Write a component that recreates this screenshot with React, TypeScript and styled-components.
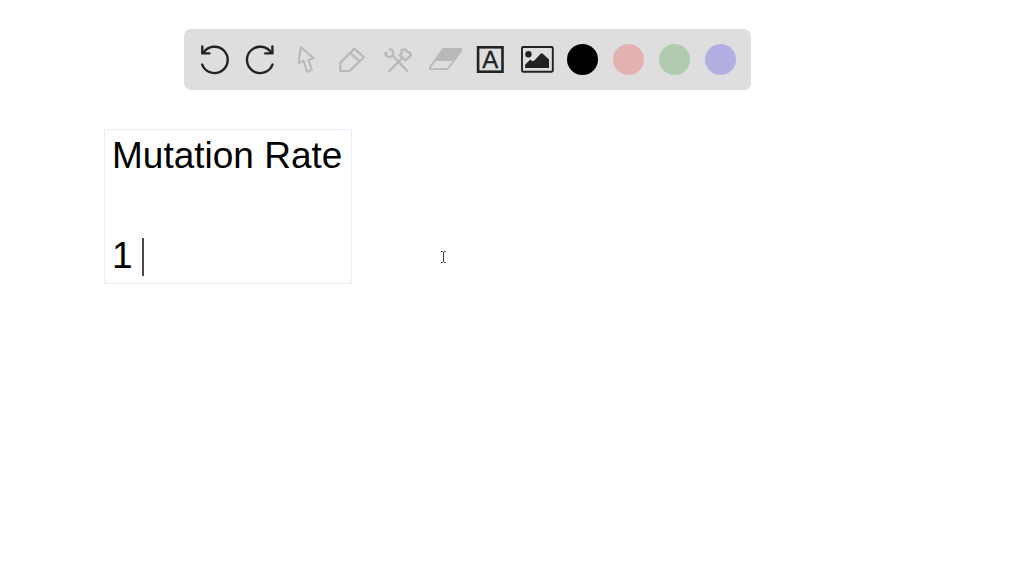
import React, { useState } from 'react';
import styled, { createGlobalStyle } from 'styled-components';

const GlobalStyle = createGlobalStyle`
  *, *::before, *::after { box-sizing: border-box; }
  body {
    margin: 0;
    background: #fff;
    font-family: "Liberation Sans", Arial, sans-serif;
  }
`;

const Board = styled.main`
  position: relative;
  display: flex;
  flex-direction: column;
  align-items: flex-start;
  min-height: 100vh;
  padding: 29px 24px 24px 184px;
  background: #fff;
  overflow: hidden;
`;

const Toolbar = styled.div`
  display: flex;
  align-items: center;
  padding: 8px 7px 7px 8px;
  border-radius: 7px;
  background: #dedede;
`;

const ToolButton = styled.button<{ $muted?: boolean }>`
  display: flex;
  width: 46px;
  height: 46px;
  padding: 0;
  border: 0;
  background: none;
  color: ${({ $muted }) => ($muted ? '#b9b9b9' : '#222')};
  cursor: pointer;
`;

const Swatch = styled.span<{ $color: string }>`
  width: 31px;
  height: 31px;
  margin: 7px;
  border-radius: 50%;
  background: ${({ $color }) => $color};
`;

const Note = styled.div`
  position: absolute;
  left: 104px;
  top: 129px;
`;

const NoteInput = styled.textarea`
  display: block;
  width: 248px;
  height: 155px;
  padding: 1px 2px 1px 7px;
  border: 1px solid #e6edf9;
  outline: 0;
  background: transparent;
  color: #000;
  font: 37px/50px "Liberation Sans", Arial, sans-serif;
  white-space: pre;
  overflow: hidden;
  resize: none;
  caret-color: transparent;
`;

const Caret = styled.span`
  position: absolute;
  left: 38px;
  top: 109px;
  width: 2px;
  height: 38px;
  background: #4a4a4a;
`;

const Pointer = styled.svg`
  position: absolute;
  left: 439px;
  top: 250px;
`;

const Icon = ({ children, weight = 2 }: { children: React.ReactNode; weight?: number }) => (
  <svg
    width="46"
    height="46"
    viewBox="0 0 46 46"
    fill="none"
    stroke="currentColor"
    strokeWidth={weight}
    aria-hidden="true"
  >
    {children}
  </svg>
);

const tools = [
  {
    name: 'Undo',
    muted: false,
    icon: (
      <Icon weight={2.4}>
        <path d="M10.2 27.6A13.2 13.2 0 1 0 11.4 15.8" strokeLinecap="round" />
        <path d="M10.3 9.4V16.4H17.4" strokeLinecap="round" strokeLinejoin="round" />
      </Icon>
    ),
  },
  {
    name: 'Redo',
    muted: false,
    icon: (
      <Icon weight={2.4}>
        <path d="M34.5 27.6A13.2 13.2 0 1 1 33.3 15.8" strokeLinecap="round" />
        <path d="M34.4 9.4V16.4H27.3" strokeLinecap="round" strokeLinejoin="round" />
      </Icon>
    ),
  },
  {
    name: 'Select',
    muted: true,
    icon: (
      <Icon>
        <path
          d="M16.8 10L14.6 26L19.6 23.9L22.9 34.8L27.9 32.8L24.4 23L29.8 21.4Z"
          strokeLinejoin="round"
        />
      </Icon>
    ),
  },
  {
    name: 'Pen',
    muted: true,
    icon: (
      <Icon weight={2.2}>
        <path d="M10.4 34V25.6L24.3 11.6L33.9 20.3L19.4 34ZM20 15.8L29.7 24.4" strokeLinejoin="round" />
      </Icon>
    ),
  },
  {
    name: 'Tools',
    muted: true,
    icon: (
      <Icon weight={2.3}>
        <path d="M13.2 11.9A4.4 4.4 0 0 1 16.9 18.2A4.4 4.4 0 0 1 9.1 15.4M9.1 15.4L11.4 16.4M13.2 11.9L13.6 13.6" />
        <path d="M16.9 18.9L31.6 34.4M12.6 34.6L25.6 21.6" />
        <path
          d="M23.6 18.2L26 15.6L25.4 12.8L29 12.3L31.8 15.2L33.6 15.4L35.2 18L29.4 23.4Z"
          strokeLinejoin="round"
        />
      </Icon>
    ),
  },
  {
    name: 'Eraser',
    muted: true,
    icon: (
      <Icon weight={1.8}>
        <path
          d="M22.4 12H37.8Q40.4 12 38.6 14.3L26.7 30.8Q25.8 32.2 24 32.2H9Q6.7 32.2 8.2 30L20 13.4Q21 12 22.4 12Z"
          strokeLinejoin="round"
        />
        <path d="M13.2 23L20 13.4Q21 12 22.4 12H37.8Q40.4 12 38.6 14.3L32.3 23Z" fill="currentColor" />
      </Icon>
    ),
  },
  {
    name: 'Text',
    muted: false,
    icon: (
      <Icon weight={2.6}>
        <rect x="10.1" y="10.3" width="24.4" height="24.4" />
        <text
          x="22.2"
          y="31"
          textAnchor="middle"
          fontFamily="Liberation Sans, Arial, sans-serif"
          fontSize="24"
          fill="currentColor"
          strokeWidth="0.3"
        >
          A
        </text>
      </Icon>
    ),
  },
  {
    name: 'Image',
    muted: false,
    icon: (
      <Icon weight={1.9}>
        <rect x="8" y="10" width="30.8" height="24.8" rx="1.2" />
        <circle cx="14.4" cy="17.2" r="3.2" fill="currentColor" stroke="none" />
        <path
          d="M11.1 30.9V27.8L16.4 22.5L18.2 24.2L20.4 23.4L26.6 16.7Q27.7 15.6 28.8 16.7L35 22.4V30.9Z"
          fill="currentColor"
          stroke="none"
        />
      </Icon>
    ),
  },
];

const colors = [
  { name: 'Black', value: '#000' },
  { name: 'Red', value: '#e4b1b1' },
  { name: 'Green', value: '#b0cbb0' },
  { name: 'Blue', value: '#b2b0e3' },
];

export default function App() {
  const [text, setText] = useState('Mutation Rate\n\n1 ');

  return (
    <>
      <GlobalStyle />
      <Board>
        <Toolbar role="toolbar" aria-label="Drawing tools">
          {tools.map(({ name, muted, icon }) => (
            <ToolButton key={name} type="button" aria-label={name} $muted={muted}>
              {icon}
            </ToolButton>
          ))}
          {colors.map(({ name, value }) => (
            <ToolButton key={name} type="button" aria-label={name}>
              <Swatch $color={value} />
            </ToolButton>
          ))}
        </Toolbar>
        <Note>
          <NoteInput
            aria-label="Text note"
            wrap="off"
            spellCheck={false}
            value={text}
            onChange={(event) => setText(event.target.value)}
          />
          <Caret />
        </Note>
        <Pointer width="9" height="14" viewBox="0 0 9 14" fill="none" stroke="#444" aria-hidden="true">
          <path d="M2 1.5H4M5 1.5H7M4.5 2V12M2 12.5H4M5 12.5H7" />
        </Pointer>
      </Board>
    </>
  );
}
